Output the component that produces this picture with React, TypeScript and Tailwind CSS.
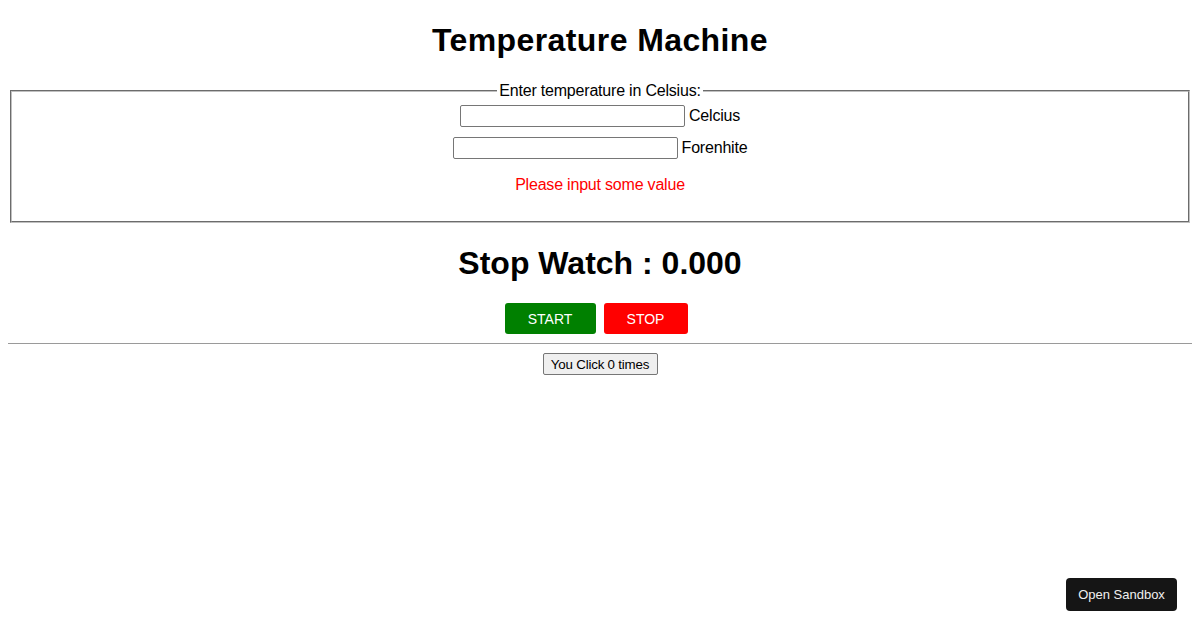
import React from "react";

export default function App() {
  return (
    <div className="min-h-[630px] bg-white text-black m-0 p-2 pt-0 relative">
      <div className="font-['Liberation_Sans',Arial,sans-serif] text-[16px] leading-[normal]">
        <h1 className="text-[32px] font-bold text-center pt-[22px] leading-[normal] tracking-[0.4px]">Temperature Machine</h1>
        <fieldset className="mx-[2px] mt-[23px] border-2 [border-style:groove] border-[#c0c0c0] px-3 pb-[27px] text-center tracking-[-0.2px]">
          <legend className="mx-auto px-[2px]">Enter temperature in Celsius:</legend>
          <div className="flex flex-col items-center pt-[5px]">
            <div className="flex items-baseline">
              <input type="text" className="w-[225px] h-[22px] border border-[#767676] rounded-[2px] px-[2px] text-[13.33px] bg-white" />
              <span className="ml-1">Celcius</span>
            </div>
            <div className="flex items-baseline mt-[10px]">
              <input type="text" className="w-[225px] h-[22px] border border-[#767676] rounded-[2px] px-[2px] text-[13.33px] bg-white" />
              <span className="ml-1">Forenhite</span>
            </div>
            <p className="text-[#ff0000] mt-[17px]">Please input some value</p>
          </div>
        </fieldset>
        <h1 className="text-[32px] font-bold text-center mt-[22px] leading-[normal]">Stop Watch : 0.000</h1>
        <div className="flex justify-center mt-[21px]">
          <button className="bg-[#008000] text-white text-[14px] h-[31px] w-[91px] rounded-[3px] mr-2">START</button>
          <button className="bg-[#ff0000] text-white text-[14px] h-[31px] w-[84px] rounded-[3px] mr-2">STOP</button>
        </div>
        <hr className="mt-[9px] border-t border-[#9a9a9a] border-b-0" />
        <div className="flex justify-center mt-[9px]">
          <button className="h-[22px] w-[115px] text-[13.33px] tracking-[-0.2px] bg-[#efefef] border border-[#767676] rounded-[2px]">You Click 0 times</button>
        </div>
      </div>
      <button className="fixed right-[23px] bottom-[19px] w-[111px] h-[33px] bg-[#151515] text-[#f0f0f0] text-[13px] rounded-[4px] font-['Liberation_Sans',Arial,sans-serif]">Open Sandbox</button>
    </div>
  );
}
